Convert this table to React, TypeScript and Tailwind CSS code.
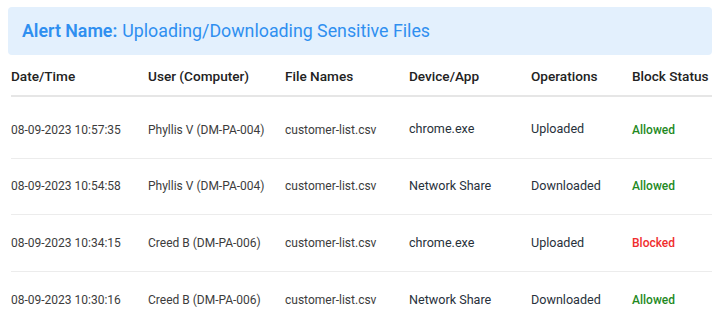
import React from "react";

const rows = [
  { dt: "08-09-2023 10:57:35", user: "Phyllis V (DM-PA-004)", file: "customer-list.csv", dev: "chrome.exe", op: "Uploaded", status: "Allowed" },
  { dt: "08-09-2023 10:54:58", user: "Phyllis V (DM-PA-004)", file: "customer-list.csv", dev: "Network Share", op: "Downloaded", status: "Allowed" },
  { dt: "08-09-2023 10:34:15", user: "Creed B (DM-PA-006)", file: "customer-list.csv", dev: "chrome.exe", op: "Uploaded", status: "Blocked" },
  { dt: "08-09-2023 10:30:16", user: "Creed B (DM-PA-006)", file: "customer-list.csv", dev: "Network Share", op: "Downloaded", status: "Allowed" },
];

const cols = "grid grid-cols-[137px_137px_124px_122px_101px_1fr]";

export default function App() {
  return (
    <div className="w-[720px] h-[326px] bg-white overflow-hidden pt-[7px] pl-[8px] pr-[8px]" style={{ fontFamily: "Roboto, 'Liberation Sans', sans-serif" }}>
      <div className="h-[48px] rounded-[4px] bg-[#e3f0fd] flex items-center pl-[14px] text-[17.8px] text-[#2f8ff0]">
        <span className="font-semibold">Alert Name:</span>
        <span className="ml-[5px]">Uploading/Downloading Sensitive Files</span>
      </div>
      <div className="ml-[3px] mt-[2px]">
        <div className={`${cols} h-[40px] items-center border-b-2 border-[#e6e6e6] text-[13.6px] font-medium text-[#222]`}>
          <div>Date/Time</div>
          <div>User (Computer)</div>
          <div>File Names</div>
          <div>Device/App</div>
          <div>Operations</div>
          <div>Block Status</div>
        </div>
        <div className="pt-[5px]">
          {rows.map((r, i) => (
            <div key={i} className={`${cols} h-[56.6px] items-center ${i < rows.length - 1 ? "border-b border-[#ececec]" : ""}`}>
              <div className="text-[12px] text-[#3c3c3c]">{r.dt}</div>
              <div className="text-[12px] text-[#3c3c3c]">{r.user}</div>
              <div className="text-[12px] text-[#3c3c3c]">{r.file}</div>
              <div className="text-[12.6px] text-[#28313b]">{r.dev}</div>
              <div className="text-[12.6px] text-[#28313b]">{r.op}</div>
              <div className={`text-[12px] font-medium ${r.status === "Blocked" ? "text-[#f02d2d]" : "text-[#1f8a1f]"}`}>{r.status}</div>
            </div>
          ))}
        </div>
      </div>
    </div>
  );
}
